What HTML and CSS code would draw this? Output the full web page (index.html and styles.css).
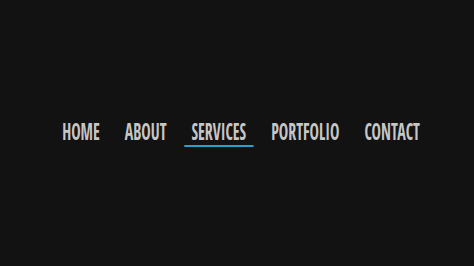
FILE: index.html
```html
<!DOCTYPE html>
<html>
<head>
<meta charset="utf-8">
<title>Navigation</title>
<link rel="stylesheet" href="styles.css">
</head>
<body>
<div class="stage">
  <nav class="nav">
    <ul class="nav-list">
      <li><a class="nav-link" href="#">HOME</a></li>
      <li><a class="nav-link" href="#">ABOUT</a></li>
      <li><a class="nav-link is-active" href="#">SERVICES</a></li>
      <li><a class="nav-link" href="#">PORTFOLIO</a></li>
      <li><a class="nav-link" href="#">CONTACT</a></li>
    </ul>
  </nav>
</div>
</body>
</html>
```
FILE: styles.css
```css
html, body {
  margin: 0;
  padding: 0;
  background: #121212;
}
.stage {
  height: 266px;
  display: flex;
  align-items: center;
  justify-content: center;
  padding-left: 9px;
  box-sizing: border-box;
}
.nav {
  transform: scaleX(0.66);
  transform-origin: center center;
}
.nav-list {
  list-style: none;
  margin: 0;
  padding: 0;
  display: flex;
  gap: 16px;
}
.nav-link {
  display: block;
  padding: 0 11px 2px;
  border-bottom: 2px solid transparent;
  font-family: "Open Sans Condensed", "Open Sans", sans-serif;
  font-weight: 700;
  font-size: 24px;
  line-height: 24px;
  color: #c6c6c6;
  text-decoration: none;
}
.nav-link.is-active {
  border-bottom-color: #2a9fd2;
}
```
